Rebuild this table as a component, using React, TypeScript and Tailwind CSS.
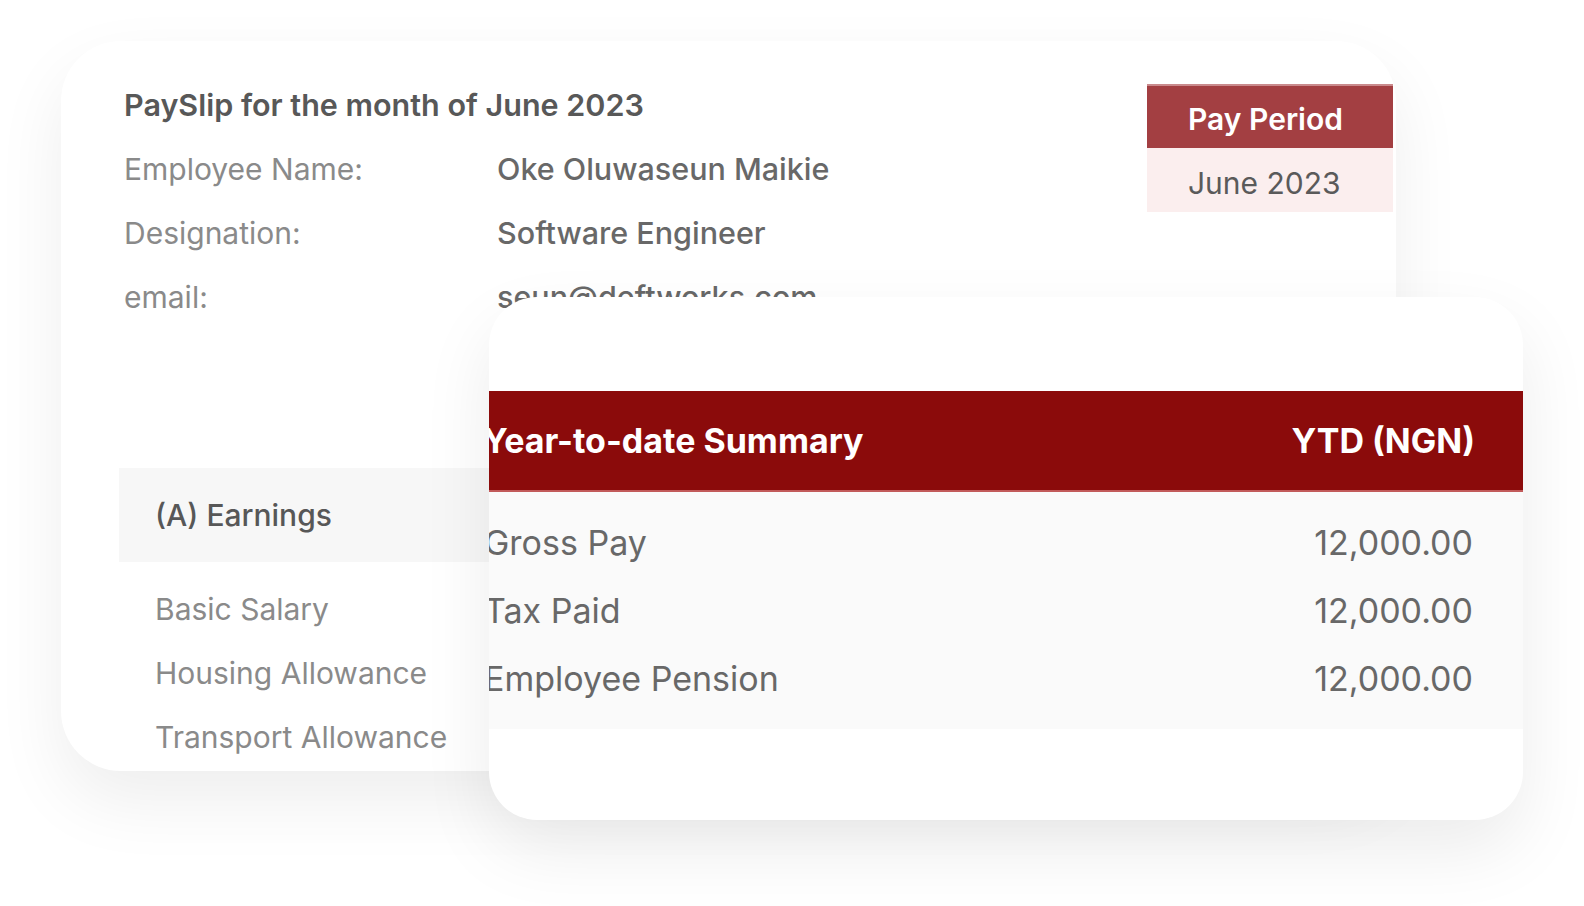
const DETAILS = [
  { label: "Employee Name:", value: "Oke Oluwaseun Maikie" },
  { label: "Designation:", value: "Software Engineer" },
  { label: "email:", value: "seun@deftworks.com" },
];

const EARNINGS = ["Basic Salary", "Housing Allowance", "Transport Allowance"];

const YTD_ROWS = [
  { label: "Gross Pay", amount: "12,000.00" },
  { label: "Tax Paid", amount: "12,000.00" },
  { label: "Employee Pension", amount: "12,000.00" },
];

function PayPeriod() {
  return (
    <div className="mt-[11px] w-[246px]">
      <div className="flex h-[64px] items-center border-t-2 border-[#c98a8c] bg-[#a33f42] pl-[41px] pt-[5px] text-[30px] font-semibold text-white">
        Pay Period
      </div>
      <div className="flex h-[64px] items-center bg-[#fbeeee] pl-[41px] pt-[6px] text-[30px] text-[#5a5a5a]">
        June 2023
      </div>
    </div>
  );
}

function PaySlipCard() {
  return (
    <div className="ml-[61px] mt-[40px] h-[730px] w-[1335px] overflow-hidden rounded-[60px] bg-white shadow-[0_30px_70px_rgba(0,0,0,0.07)]">
      <div className="flex items-start justify-between pl-[63px] pr-[3px] pt-[32px]">
        <div className="flex flex-col">
          <div className="flex h-[64px] items-center text-[30.5px] font-semibold text-[#585858]">
            PaySlip for the month of June 2023
          </div>
          {DETAILS.map((d) => (
            <div key={d.label} className="grid h-[64px] grid-cols-[373px_1fr] items-center text-[30px]">
              <span className="text-[#8a8a8a]">{d.label}</span>
              <span className="text-[30.5px] font-medium text-[#686868]">{d.value}</span>
            </div>
          ))}
        </div>
        <PayPeriod />
      </div>

      {/* Earnings */}
      <div className="mx-[58px] mt-[139px]">
        <div className="flex h-[94px] items-center bg-[#f7f7f7] pl-[36px] text-[30px] font-medium text-[#575757]">
          (A) Earnings
        </div>
        <div className="flex flex-col pl-[36px] pt-[15px]">
          {EARNINGS.map((e) => (
            <div key={e} className="flex h-[64px] items-center text-[30px] text-[#8a8a8a]">
              {e}
            </div>
          ))}
        </div>
      </div>
    </div>
  );
}

function SummaryCard() {
  return (
    <div className="absolute left-[489px] top-[297px] h-[523px] w-[1034px] overflow-hidden rounded-[48px] bg-white shadow-[0_30px_70px_rgba(0,0,0,0.08)]">
      <div className="mt-[94px] flex h-[101px] items-center justify-between border-b-2 border-[#c25a5a] bg-[#8b0b0b] pr-[48px] text-[34px] font-bold text-white">
        <span className="-ml-[6px]">Year-to-date Summary</span>
        <span>YTD (NGN)</span>
      </div>
      <div className="flex h-[237px] flex-col justify-center bg-[#fafafa] pr-[50px]">
        {YTD_ROWS.map((r) => (
          <div key={r.label} className="flex h-[68px] items-center justify-between text-[34px] text-[#686868]">
            <span className="-ml-[5px]">{r.label}</span>
            <span>{r.amount}</span>
          </div>
        ))}
      </div>
    </div>
  );
}

export default function App() {
  return (
    <div className="relative h-[906px] w-[1584px] overflow-hidden bg-white pt-px font-['Inter',sans-serif]">
      <PaySlipCard />
      <SummaryCard />
    </div>
  );
}
